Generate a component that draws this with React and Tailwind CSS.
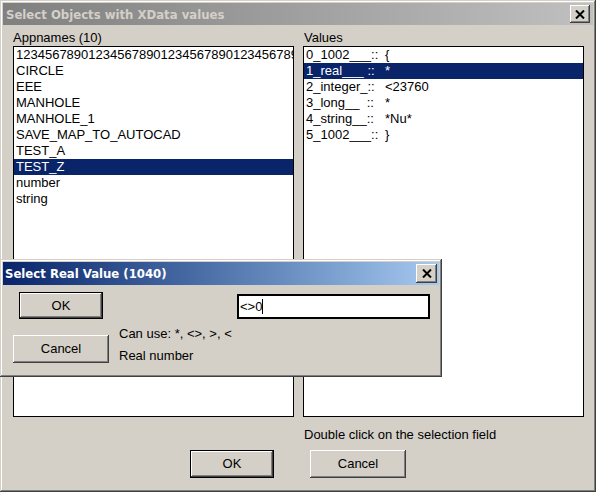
import React from "react";

const appnames = [
    "12345678901234567890123456789012345678901234567890",
    "CIRCLE",
    "EEE",
    "MANHOLE",
    "MANHOLE_1",
    "SAVE_MAP_TO_AUTOCAD",
    "TEST_A",
    "TEST_Z",
    "number",
    "string",
];

const values = [
    ["0_1002___::", "{"],
    ["1_real___ ::", "*"],
    ["2_integer_::", "<23760"],
    ["3_long__  ::", "*"],
    ["4_string__::", "*Nu*"],
    ["5_1002___::", "}"],
];

const raised =
    "shadow-[inset_-1px_-1px_#404040,inset_1px_1px_#ffffff,inset_-2px_-2px_#808080,inset_2px_2px_#d4d0c8]";
const windowEdge =
    "shadow-[inset_-1px_-1px_#404040,inset_1px_1px_#d4d0c8,inset_-2px_-2px_#808080,inset_2px_2px_#ffffff]";

const Button = ({ label, isDefault, className = "" }) => (
    <div className={`${className} ${isDefault ? "border border-black" : ""} bg-[#d4d0c8]`}>
        <div className={`w-full h-full flex items-center justify-center ${raised} text-[13px] text-black`}>
            {label}
        </div>
    </div>
);

const CloseBox = ({ className = "" }) => (
    <div className={`${className} bg-[#d4d0c8] ${raised} flex items-center justify-center`}>
        <svg width="10" height="9" viewBox="0 0 10 9">
            <path d="M1 0.5 L9 8.5 M9 0.5 L1 8.5" stroke="#000" strokeWidth="2" />
        </svg>
    </div>
);

const rowClass = (sel) =>
    `h-4 leading-4 pl-[2px] text-[13px] whitespace-nowrap ${sel ? "bg-[#0a246a] text-white" : "text-black"}`;

export default function App() {
    return (
        <div
            className={`relative w-[596px] h-[492px] bg-[#d4d0c8] ${windowEdge} p-[3px] overflow-hidden`}
            style={{ fontFamily: '"Liberation Sans", Arial, sans-serif' }}
        >
            {/* main title bar */}
            <div className="h-[22px] bg-gradient-to-r from-[#808080] to-[#c0c0c0] flex items-center justify-between pl-[3px] pr-[3px]">
                <span
                    className="text-[#d4d0c8] font-bold text-[13px] leading-none"
                    style={{ fontFamily: '"DejaVu Sans Condensed", "DejaVu Sans", sans-serif' }}
                >
                    Select Objects with XData values
                </span>
                <CloseBox className="w-[20px] h-[18px]" />
            </div>

            <div className="px-[10px] pt-[5px]">
                <div className="grid grid-cols-[281px_281px] gap-[9px]">
                    <div>
                        <div className="text-[13px] leading-[16px] h-[16px]">Appnames (10)</div>
                        <div className="h-[371px] bg-white border border-black overflow-hidden">
                            {appnames.map((item, i) => (
                                <div key={i} className={`${rowClass(i === 7)} overflow-hidden`}>
                                    {item}
                                </div>
                            ))}
                        </div>
                    </div>
                    <div>
                        <div className="text-[13px] leading-[16px] h-[16px] pl-[1px]">Values</div>
                        <div className="h-[371px] bg-white border border-black overflow-hidden">
                            {values.map(([name, val], i) => (
                                <div key={i} className={`${rowClass(i === 1)} flex`}>
                                    <span className="w-[79px] shrink-0 whitespace-pre">{name}</span>
                                    <span>{val}</span>
                                </div>
                            ))}
                        </div>
                    </div>
                </div>
                <div className="grid grid-cols-[281px_281px] gap-[9px] mt-[10px]">
                    <div />
                    <div className="text-[13px] leading-[16px] pl-[1px]">Double click on the selection field</div>
                </div>
                <div className="flex mt-[7px] pl-[177px]">
                    <Button label="OK" isDefault className="w-[84px] h-[28px]" />
                    <Button label="Cancel" className="w-[96px] h-[28px] ml-[36px]" />
                </div>
            </div>

            {/* sub dialog */}
            <div className={`absolute left-0 top-[259px] w-[442px] h-[118px] bg-[#d4d0c8] ${windowEdge} p-[3px]`}>
                <div className="h-[23px] bg-gradient-to-r from-[#0a246a] to-[#a6caf0] flex items-center justify-between pl-[2px] pr-[2px]">
                    <span
                        className="text-white font-bold text-[13px] leading-none"
                        style={{ fontFamily: '"DejaVu Sans Condensed", "DejaVu Sans", sans-serif' }}
                    >
                        Select Real Value (1040)
                    </span>
                    <CloseBox className="w-[21px] h-[19px]" />
                </div>
                <div className="flex pt-[7px]">
                    <div className="flex flex-col w-[116px]">
                        <Button label="OK" isDefault className="w-[84px] h-[27px] ml-[16px]" />
                        <Button label="Cancel" className="w-[96px] h-[28px] ml-[10px] mt-[16px]" />
                    </div>
                    <div className="flex flex-col pt-[34px] w-[118px] text-[13px] leading-[16px] whitespace-nowrap">
                        <div>Can use: *, &lt;&gt;, &gt;, &lt;</div>
                        <div className="mt-[6px]">Real number</div>
                    </div>
                    <div className="mt-[2px] w-[193px] h-[25px] bg-white border-2 border-black flex items-center pl-[1px] text-[13px]">
                        &lt;&gt;0<span className="inline-block w-[1px] h-[15px] bg-black" />
                    </div>
                </div>
            </div>
        </div>
    );
}
